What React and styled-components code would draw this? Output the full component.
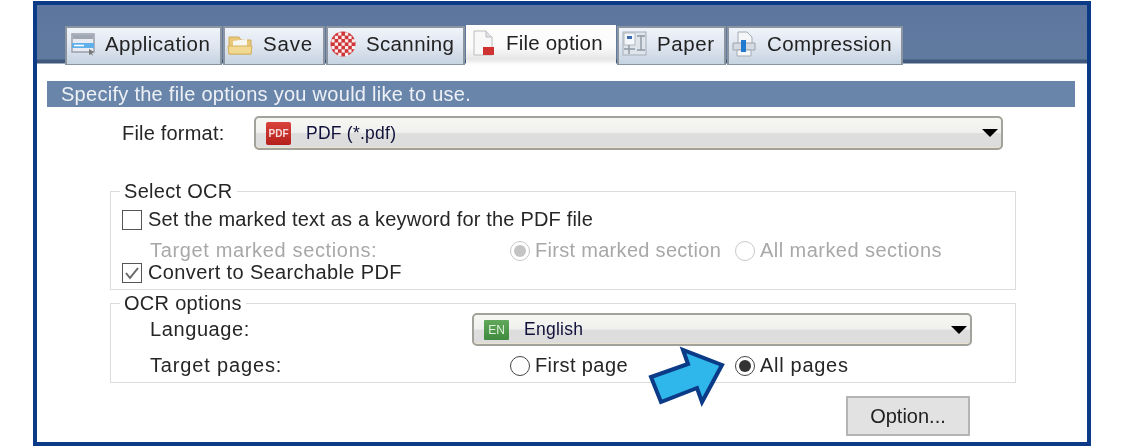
import React from 'react';
import styled, { createGlobalStyle } from 'styled-components';

const Global = createGlobalStyle`
  html, body { margin: 0; padding: 0; background: #fff; }
  body { font-family: "Liberation Sans", Arial, sans-serif; color: #262626; }
  * { box-sizing: border-box; }
`;
const Page = styled.div`
  width: 1123px; height: 446px; padding: 1px 32px 0 33px; overflow: hidden;
`;
const Frame = styled.div`
  position: relative; height: 445px; border: 4px solid #0b3a87; background: #fff; filter: blur(.45px);
`;
const Header = styled.div`
  height: 60px; padding-left: 28px; display: flex; align-items: flex-end; gap: 1px;
  background: linear-gradient(#5c769e 0, #607a9f 54px, #3f587c 55px, #3f587c 58px, #fff 59px);
`;
const Tab = styled.div`
  height: ${p => (p.$active ? 40 : 39)}px; width: ${p => p.$w}px; display: flex; align-items: center;
  gap: ${p => p.$gap}px; padding: 0 0 4px ${p => p.$pad}px; font-size: 20.5px; letter-spacing: ${p => p.$ls}px; color: #222;
  background: ${p => (p.$active ? 'linear-gradient(#fdfdfd 0, #fbfbfb 55%, #e6e6e6 85%, #fff 100%)' : 'linear-gradient(#f0f4fa 0, #dfe6f0 50%, #c6d3e0 100%)')};
  border: ${p => (p.$active ? '0' : '2px solid #8b94a1')};
  border-bottom-width: ${p => (p.$active ? 0 : 1)}px;
`;
const Strip = styled.div`
  margin: 16px 12px 0 10px; height: 26px; padding-left: 14px; background: #6a85aa; color: #edf1f6;
  font-size: 20px; line-height: 26px; letter-spacing: .28px;
`;
const Format = styled.div`
  margin: 9px 0 0 85px; display: flex; align-items: center; font-size: 20px;
`;
const FormatLabel = styled.div`width: 132px; letter-spacing: .2px;`;
const Combo = styled.div`
  width: ${p => p.$w}px; height: ${p => p.$h}px; display: flex; align-items: center; gap: 15px; padding: 0 3px 0 10px;
  border: 2px solid #a2a29a; border-radius: 5px; font-size: 17.5px; letter-spacing: .25px; color: #10103a;
  background: linear-gradient(#f6f6f3 0, #f0f0ee 48%, #dedede 52%, #dcdcdc 100%);
  box-shadow: inset 0 -1px 0 #e9e4cf;
`;
const ComboText = styled.span`flex: 1;`;
const Caret = styled.span`
  width: 0; height: 0; border: 8px solid transparent; border-top: 8px solid #000; border-bottom: 0;
`;
const Group = styled.fieldset`
  margin: ${p => p.$top}px 0 0 73px; width: 906px; padding: 0 0 ${p => p.$bottom}px 11px; min-width: 0;
  border: 1px solid #dcdcdc;
`;
const Legend = styled.legend`
  margin-left: -2px; padding: 0 4px; font-size: 20px; line-height: 22px; height: 22px; letter-spacing: .3px;
`;
const Row = styled.div`
  display: grid; grid-template-columns: ${p => p.$cols || '388px 225px 1fr'}; align-items: center; font-size: 20px;
  height: ${p => p.$h || 22}px; margin-top: ${p => p.$top || 0}px; color: ${p => (p.$muted ? '#a8a8a8' : 'inherit')};
`;
const Indented = styled.div`padding-left: 28px; letter-spacing: ${p => p.$ls}px;`;
const Check = styled.div`display: flex; align-items: center; gap: 6px; white-space: nowrap; letter-spacing: ${p => p.$ls}px;`;
const Box = styled.span`
  width: 20px; height: 20px; flex: none; border: 1.5px solid #555; background: #fff; display: inline-flex; align-items: center; justify-content: center;
`;
const Radio = styled.label`display: flex; align-items: center; gap: 5px; white-space: nowrap; color: inherit; letter-spacing: ${p => p.$ls || .3}px;`;
const Dot = styled.span`
  width: 20px; height: 20px; flex: none; border-radius: 50%; border: 1.5px solid ${p => (p.$muted ? '#c8c8c8' : '#444')}; background: #fff;
  display: inline-flex; align-items: center; justify-content: center;
  &::after { content: ''; width: 12px; height: 12px; border-radius: 50%; background: ${p => (p.$on ? (p.$muted ? '#c4c4c4' : '#333') : 'transparent')}; }
`;
const Footer = styled.div`margin: 13px 117px 0 0; display: flex; justify-content: flex-end;`;
const Button = styled.button`
  width: 124px; height: 40px; background: #e2e2e2; border: 2px solid #b4b4b4; font: inherit; font-size: 20px; color: #222; padding: 0;
`;
const ArrowWrap = styled.svg`position: absolute; left: 608px; top: 340px;`;
const IconSvg = styled.svg`flex: none;`;
const PdfBadge = styled.span`
  width: 25px; height: 23px; border-radius: 2px; background: linear-gradient(#d8423a, #b4201c); color: #f6dcdc;
  font: bold 10px "Liberation Sans", sans-serif; letter-spacing: 0; display: inline-flex; align-items: center; justify-content: center; flex: none;
`;
const EnBadge = styled.span`
  width: 25px; height: 20px; border-radius: 1px; background: linear-gradient(#62a85c, #3e8a3e); color: #dff0da;
  font: 12px "Liberation Sans", sans-serif; letter-spacing: 0; display: inline-flex; align-items: center; justify-content: center; flex: none;
`;

const AppIcon = () => (
  <IconSvg width="26" height="26" viewBox="0 0 26 26">
    <rect x="2" y="3" width="22" height="18" fill="#e8ecf2" stroke="#9aa0aa" strokeWidth="1.5" />
    <rect x="3" y="4" width="20" height="4" fill="#a0a8b4" />
    <rect x="2" y="12" width="22" height="5" fill="#5fb0ea" />
    <path d="M4 14.5h10" stroke="#fff" strokeWidth="1.5" />
    <path d="M19 18l5 3-2 1 1 3-2-2-2 1z" fill="#777" />
  </IconSvg>
);
const FolderIcon = () => (
  <IconSvg width="26" height="26" viewBox="0 0 26 26">
    <path d="M2 6h10l2 3h10v14H2z" fill="#e8c878" stroke="#d0ac5c" />
    <path d="M6 10l14-2v8H6z" fill="#f7f7f2" />
    <path d="M1 15h24l-1 8H2z" fill="#f2d992" stroke="#d4b060" />
  </IconSvg>
);
const ScanIcon = () => {
  const dots = [];
  for (let r = 0; r < 7; r++) for (let c = 0; c < 7; c++) if ((r + c) % 2 === 0) dots.push([3 + c * 3.4, 3 + r * 3.4]);
  return (
    <IconSvg width="26" height="26" viewBox="0 0 26 26">
      <circle cx="13" cy="13" r="12.5" fill="#cf3438" />
      {dots.filter(([x, y]) => Math.hypot(x - 13, y - 13) < 11.5).map(([x, y]) => (
        <rect key={`${x}-${y}`} x={x - 1.6} y={y - 1.6} width="3.2" height="3.2" fill="#f8ecec" />
      ))}
    </IconSvg>
  );
};
const FileIcon = () => (
  <IconSvg width="24" height="26" viewBox="0 0 24 26">
    <path d="M2 1h12l6 6v18H2z" fill="#f8f8f8" stroke="#bcbcbc" />
    <path d="M14 1v6h6" fill="#dde2e8" stroke="#bcbcbc" />
    <rect x="11" y="17" width="11" height="8" fill="#cf3230" />
  </IconSvg>
);
const PaperIcon = () => (
  <IconSvg width="26" height="26" viewBox="0 0 26 26">
    <rect x="1" y="1" width="23" height="23" fill="#dfe4ea" stroke="#a4aeb9" />
    <rect x="2" y="2" width="11" height="12" fill="#f5f7fa" stroke="#b0b8c0" />
    <rect x="5" y="5" width="5" height="3" fill="#3e6db0" />
    <path d="M15 5h8M15 19h8M19 5v14M2 18h11M7 14v9" stroke="#8d98a3" strokeWidth="1.4" fill="none" />
  </IconSvg>
);
const PrinterIcon = () => (
  <IconSvg width="24" height="26" viewBox="0 0 24 26">
    <path d="M6 1h9l5 5v9H6z" fill="#f5f6f8" stroke="#a4acb5" />
    <path d="M1 12h22v7H1z" fill="#d6dbe1" stroke="#9ca4ae" />
    <path d="M5 19h14v6H5z" fill="#f5f6f8" stroke="#a4acb5" />
    <rect x="9" y="9" width="5" height="12" fill="#1f7ad0" />
  </IconSvg>
);
const Tick = () => (
  <svg width="16" height="16" viewBox="0 0 16 16"><path d="M2 8l4 5 8-10" fill="none" stroke="#666" strokeWidth="2" /></svg>
);

const tabs = [
  { label: 'Application', w: 157, pad: 3, gap: 9, ls: .45, Icon: AppIcon },
  { label: 'Save', w: 102, pad: 2, gap: 10, ls: .85, Icon: FolderIcon },
  { label: 'Scanning', w: 139, pad: 2, gap: 10, ls: .35, Icon: ScanIcon },
  { label: 'File option', w: 150, pad: 6, gap: 10, ls: .2, Icon: FileIcon, active: true },
  { label: 'Paper', w: 109, pad: 3, gap: 9, ls: .6, Icon: PaperIcon },
  { label: 'Compression', w: 176, pad: 3, gap: 11, ls: .4, Icon: PrinterIcon },
];

export default function App() {
  return (
    <>
      <Global />
      <Page>
        <Frame>
          <Header>
            {tabs.map(({ label, w, pad, gap, ls, Icon, active }) => (
              <Tab key={label} $w={w} $pad={pad} $gap={gap} $ls={ls} $active={active}><Icon />{label}</Tab>
            ))}
          </Header>
          <Strip>Specify the file options you would like to use.</Strip>
          <Format>
            <FormatLabel>File format:</FormatLabel>
            <Combo $w={749} $h={34}><PdfBadge>PDF</PdfBadge><ComboText>PDF (*.pdf)</ComboText><Caret /></Combo>
          </Format>
          <Group $top={30} $bottom={6}>
            <Legend>Select OCR</Legend>
            <Row $top={6}><Check $ls={.19}><Box />Set the marked text as a keyword for the PDF file</Check></Row>
            <Row $top={9} $muted>
              <Indented $ls={.65}>Target marked sections:</Indented>
              <Radio><Dot $on $muted />First marked section</Radio>
              <Radio $ls={.45}><Dot $muted />All marked sections</Radio>
            </Row>
            <Row><Check $ls={.37}><Box><Tick /></Box>Convert to Searchable PDF</Check></Row>
          </Group>
          <Group $top={2} $bottom={6}>
            <Legend>OCR options</Legend>
            <Row $h={33} $top={-1} $cols="350px 500px">
              <Indented $ls={.6}>Language:</Indented>
              <Combo $w={500} $h={33}><EnBadge>EN</EnBadge><ComboText>English</ComboText><Caret /></Combo>
            </Row>
            <Row $top={8}>
              <Indented $ls={.85}>Target pages:</Indented>
              <Radio $ls={.4}><Dot />First page</Radio>
              <Radio $ls={.7}><Dot $on />All pages</Radio>
            </Row>
          </Group>
          <Footer><Button>Option...</Button></Footer>
          <ArrowWrap width="90" height="70" viewBox="645 345 90 70">
            <polygon points="688,364 683,350 722,365 702,402 697,388 661,402 651,377" fill="#2fb6ea" stroke="#0b3a87" strokeWidth="4" />
          </ArrowWrap>
        </Frame>
      </Page>
    </>
  );
}
